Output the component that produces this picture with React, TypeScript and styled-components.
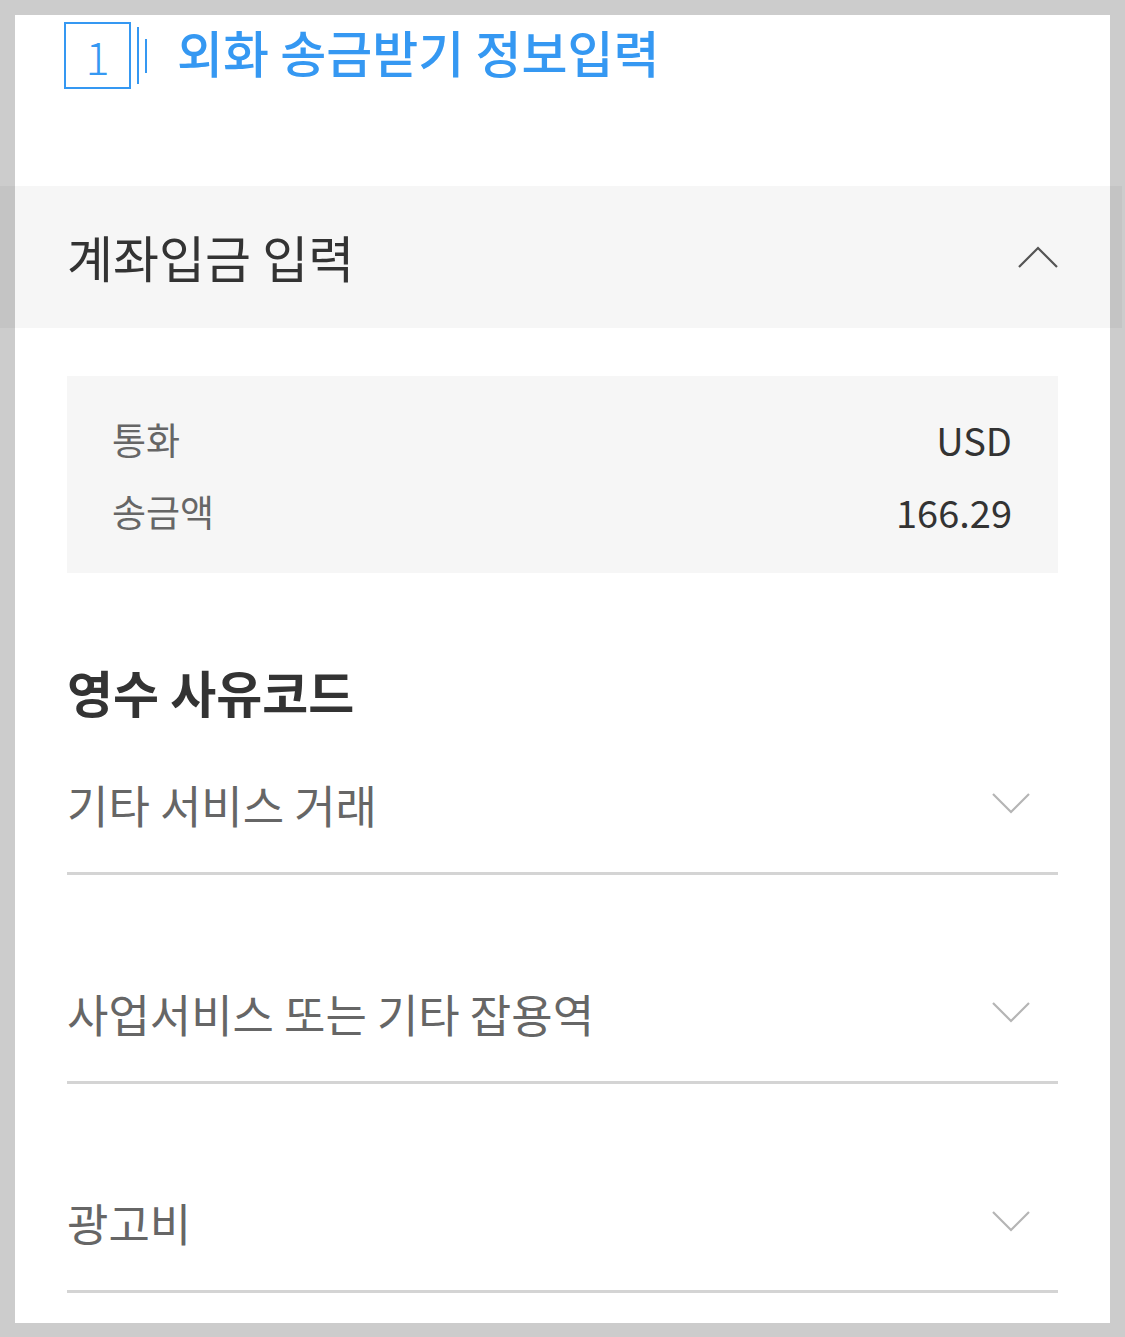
import styled, { createGlobalStyle } from "styled-components";

const GlobalStyle = createGlobalStyle`
	html, body {
		margin: 0;
		padding: 0;
		background: #cccccc;
	}

	body {
		font-family: "Noto Sans CJK KR", "Noto Sans", sans-serif;
		color: #333333;
	}

	* {
		box-sizing: border-box;
	}
`;

const BLUE = "#3598f2";

const Page = styled.div`
	padding: 15px 15px 15px;
`;

const Card = styled.main`
	background: #ffffff;
	padding: 7px 52px 30px;
	min-height: 1307px;
`;

/* step title */

const StepHeader = styled.h1`
	display: flex;
	align-items: center;
	margin: 0;
	height: 67px;
`;

const StepBox = styled.span`
	display: flex;
	align-items: center;
	justify-content: center;
	width: 67px;
	height: 67px;
	margin-left: -3px;
	border: 2px solid ${BLUE};
	color: ${BLUE};
	font-size: 45px;
	font-weight: 300;
	line-height: 1;
`;

const StackLine = styled.span<{ $h: number; $gap: number }>`
	display: block;
	width: 2px;
	height: ${({ $h }) => $h}px;
	margin-left: ${({ $gap }) => $gap}px;
	background: ${BLUE};
`;

const StepTitle = styled.span`
	margin-left: 30px;
	padding-bottom: 9px;
	color: ${BLUE};
	font-size: 50px;
	font-weight: 500;
	line-height: 1;
`;

/* accordion */

const AccordionHead = styled.button`
	display: flex;
	align-items: center;
	justify-content: space-between;
	width: calc(100% + 131px);
	height: 142px;
	margin: 97px -64px 0 -67px;
	padding: 0 64px 0 67px;
	border: 0;
	background: rgba(0, 0, 0, 0.036);
	font-family: inherit;
	text-align: left;
	cursor: pointer;
`;

const AccordionTitle = styled.span`
	color: #333333;
	font-size: 50px;
	font-weight: 400;
	margin-top: -3px;
`;

const Chevron = styled.svg<{ $color: string }>`
	display: block;
	color: ${({ $color }) => $color};
	flex-shrink: 0;
`;

/* summary box */

const Summary = styled.dl`
	margin: 48px 0 0;
	padding: 27px 46px 26px 45px;
	background: #f6f6f6;
`;

const SummaryRow = styled.div`
	display: flex;
	align-items: center;
	justify-content: space-between;
	height: 72px;
`;

const SummaryLabel = styled.dt`
	color: #666666;
	font-size: 37px;
`;

const SummaryValue = styled.dd`
	margin: 0;
	color: #333333;
	font-size: 38px;
`;

/* reason code */

const SectionTitle = styled.h2`
	margin: 89px 0 0;
	color: #333333;
	font-size: 50px;
	font-weight: 700;
	line-height: 58px;
`;

const FieldList = styled.div`
	display: flex;
	flex-direction: column;
	gap: 73px;
	margin-top: 19px;
`;

const SelectField = styled.div`
	display: flex;
	align-items: center;
	justify-content: space-between;
	height: 136px;
	padding: 0 27px 3px 0;
	border-bottom: 3px solid #d4d4d4;
	cursor: pointer;
`;

const SelectText = styled.span`
	color: #666666;
	font-size: 45px;
`;

function ChevronIcon({ up, color }: { up?: boolean; color: string }) {
	return (
		<Chevron $color={color} width="40" height="24" viewBox="0 0 40 24">
			<path
				d={up ? "M1 22 L20 3 L39 22" : "M2 2 L20 20 L38 2"}
				fill="none"
				stroke="currentColor"
				strokeWidth="2.2"
			/>
		</Chevron>
	);
}

const SUMMARY = [
	{ label: "통화", value: "USD" },
	{ label: "송금액", value: "166.29" },
];

const REASONS = ["기타 서비스 거래", "사업서비스 또는 기타 잡용역", "광고비"];

function App() {
	return (
		<>
			<GlobalStyle />
			<Page>
				<Card>
					<StepHeader>
						<StepBox>1</StepBox>
						<StackLine $h={57} $gap={6} />
						<StackLine $h={34} $gap={6} />
						<StepTitle>외화 송금받기 정보입력</StepTitle>
					</StepHeader>

					<AccordionHead type="button">
						<AccordionTitle>계좌입금 입력</AccordionTitle>
						<ChevronIcon up color="#555555" />
					</AccordionHead>

					<Summary>
						{SUMMARY.map((row) => (
							<SummaryRow key={row.label}>
								<SummaryLabel>{row.label}</SummaryLabel>
								<SummaryValue>{row.value}</SummaryValue>
							</SummaryRow>
						))}
					</Summary>

					<SectionTitle>영수 사유코드</SectionTitle>

					<FieldList>
						{REASONS.map((reason) => (
							<SelectField key={reason}>
								<SelectText>{reason}</SelectText>
								<ChevronIcon color="#b5b5b5" />
							</SelectField>
						))}
					</FieldList>
				</Card>
			</Page>
		</>
	);
}

export default App;
